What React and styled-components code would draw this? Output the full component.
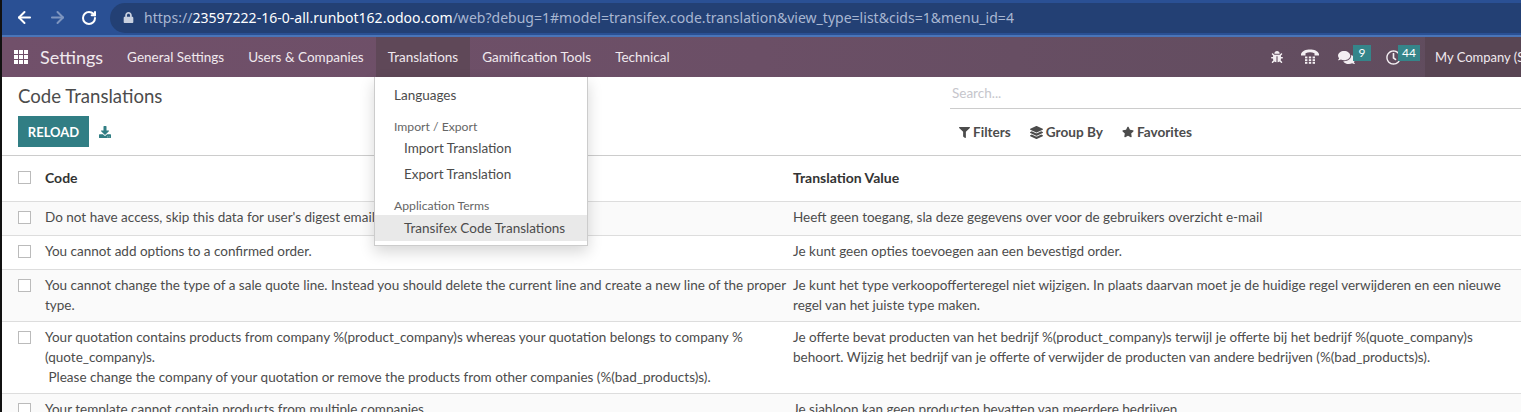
import styled, { createGlobalStyle } from "styled-components";
import { ArrowLeft, ArrowRight, RotateCw } from "lucide-react";
import { FaBug, FaComments, FaDownload, FaFilter, FaLayerGroup, FaLock, FaRegClock, FaStar } from "react-icons/fa";

const GlobalStyle = createGlobalStyle`
    html, body {
        margin: 0;
        height: 100%;
        overflow: hidden;
        background: #fff;
    }
    body {
        font-family: Lato, "Noto Sans", sans-serif;
        font-size: 13.5px;
        color: #4c4c4c;
    }
`;

const rows = [
    {
        code: ["Do not have access, skip this data for user's digest email"],
        value: ["Heeft geen toegang, sla deze gegevens over voor de gebruikers overzicht e-mail"],
    },
    {
        code: ["You cannot add options to a confirmed order."],
        value: ["Je kunt geen opties toevoegen aan een bevestigd order."],
    },
    {
        code: ["You cannot change the type of a sale quote line. Instead you should delete the current line and create a new line of the proper", "type."],
        value: ["Je kunt het type verkoopofferteregel niet wijzigen. In plaats daarvan moet je de huidige regel verwijderen en een nieuwe", "regel van het juiste type maken."],
    },
    {
        code: ["Your quotation contains products from company %(product_company)s whereas your quotation belongs to company %", "(quote_company)s.", "\u00a0Please change the company of your quotation or remove the products from other companies (%(bad_products)s)."],
        value: ["Je offerte bevat producten van het bedrijf %(product_company)s terwijl je offerte bij het bedrijf %(quote_company)s", "behoort. Wijzig het bedrijf van je offerte of verwijder de producten van andere bedrijven (%(bad_products)s)."],
    },
    {
        code: ["Your template cannot contain products from multiple companies."],
        value: ["Je sjabloon kan geen producten bevatten van meerdere bedrijven."],
    },
];

const navItems = ["General Settings", "Users & Companies", "Translations", "Gamification Tools", "Technical"];

function DeskPhone() {
    return (
        <svg width="18" height="16" viewBox="0 0 18 16" fill="currentColor">
            <path d="M0 5C1 1.800 5 .5 9 .5s8 1.300 9 4.500v1.500h-4.500V4.200C12 3.500 10.500 3.200 9 3.200s-3 .3-4.500 1v2.300H0z" />
            {[7.5, 10.2, 12.9].map((y) =>
                [4, 7.8, 11.6].map((x) => <rect key={`${x}-${y}`} x={x} y={y} width="2.400" height="1.900" />)
            )}
        </svg>
    );
}

function AppsIcon() {
    return (
        <svg width="14" height="14" viewBox="0 0 14 14" fill="currentColor">
            {[0, 5, 10].map((y) =>
                [0, 5, 10].map((x) => <rect key={`${x}-${y}`} x={x} y={y} width="4" height="4" />)
            )}
        </svg>
    );
}

export default function App() {
    return (
        <Page>
            <GlobalStyle />
            <BrowserBar>
                <BrowserButton><ArrowLeft size={19} strokeWidth={2.5} /></BrowserButton>
                <BrowserButton $dim><ArrowRight size={19} strokeWidth={2.5} /></BrowserButton>
                <BrowserButton $narrow><RotateCw size={16} strokeWidth={3} /></BrowserButton>
                <AddressBar>
                    <FaLock size={11} />
                    <span>
                        https://<b>23597222-16-0-all.runbot162.odoo.com</b>/web?debug=1#model=transifex.code.translation&amp;view_type=list&amp;cids=1&amp;menu_id=4
                    </span>
                </AddressBar>
            </BrowserBar>
            <NavBar>
                <AppsButton><AppsIcon /></AppsButton>
                <Brand>Settings</Brand>
                {navItems.map((item) => (
                    <NavItem key={item} $active={item === "Translations"}>{item}</NavItem>
                ))}
                <Systray>
                    <TrayIcon><FaBug size={12} /></TrayIcon>
                    <TrayIcon $gap={18}><DeskPhone /></TrayIcon>
                    <TrayIcon $gap={19}>
                        <FaComments size={17} />
                        <Badge $left={15}>9</Badge>
                    </TrayIcon>
                    <TrayIcon $gap={31}>
                        <FaRegClock size={15} />
                        <Badge $left={12}>44</Badge>
                    </TrayIcon>
                    <Company>My Company (San Francisco)</Company>
                </Systray>
            </NavBar>

            <Menu>
                <MenuEntry>Languages</MenuEntry>
                <MenuHeader>Import / Export</MenuHeader>
                <MenuEntry $nested>Import Translation</MenuEntry>
                <MenuEntry $nested>Export Translation</MenuEntry>
                <MenuHeader $spaced>Application Terms</MenuHeader>
                <MenuEntry $nested $active>Transifex Code Translations</MenuEntry>
            </Menu>

            <ControlPanel>
                <div>
                    <Title>Code Translations</Title>
                    <Actions>
                        <ReloadButton>RELOAD</ReloadButton>
                        <DownloadIcon><FaDownload size={12} /></DownloadIcon>
                    </Actions>
                </div>
                <SearchArea>
                    <SearchBox>Search...</SearchBox>
                    <Filters>
                        <FilterItem><FaFilter size={11} />Filters</FilterItem>
                        <FilterItem><FaLayerGroup size={13} />Group By</FilterItem>
                        <FilterItem><FaStar size={12} />Favorites</FilterItem>
                    </Filters>
                </SearchArea>
            </ControlPanel>

            <HeaderRow>
                <CheckCell><Check /></CheckCell>
                <HeadCell>Code</HeadCell>
                <HeadCell>Translation Value</HeadCell>
            </HeaderRow>
            {rows.map((row, i) => (
                <Row key={row.code[0]} $striped={i % 2 === 0}>
                    <CheckCell $top={4}><Check /></CheckCell>
                    <Cell>{row.code.map((line) => <Line key={line}>{line}</Line>)}</Cell>
                    <Cell>{row.value.map((line) => <Line key={line}>{line}</Line>)}</Cell>
                </Row>
            ))}
        </Page>
    );
}

const Page = styled.div`
    position: relative;
    width: 1521px;
    height: 412px;
    overflow: hidden;
    border-left: 2px solid #111;
    box-sizing: border-box;
`;

const BrowserBar = styled.div`
    display: flex;
    align-items: center;
    height: 35px;
    background: #2a5094;
    border-bottom: 2px solid #4a75b8;
    color: #fff;
    padding-left: 13px;
`;

const BrowserButton = styled.span`
    display: flex;
    width: ${(props) => (props.$narrow ? 29 : 33)}px;
    color: ${(props) => (props.$dim ? "#7e95bf" : "#fff")};
`;

const AddressBar = styled.div`
    display: flex;
    align-items: center;
    gap: 10px;
    flex: 1;
    height: 30px;
    padding-left: 13px;
    background: #234074;
    border-radius: 15px 0 0 15px;
    font-family: "Noto Sans", sans-serif;
    font-size: 14px;
    letter-spacing: 0.02px;
    color: #a9b7d2;
    white-space: nowrap;
    svg {
        color: #c9d1e0;
    }
    b {
        font-weight: 400;
        color: #fff;
    }
`;

const NavBar = styled.nav`
    display: flex;
    align-items: center;
    height: 40px;
    background: linear-gradient(90deg, #71506a 0%, #6b4f66 50%, #5f4c5d 100%);
    color: #f0e9ee;
`;

const AppsButton = styled.span`
    display: flex;
    padding-left: 12px;
    color: #fff;
`;

const Brand = styled.span`
    margin-left: 12px;
    margin-right: 12px;
    font-size: 18px;
`;

const NavItem = styled.span`
    display: flex;
    align-items: center;
    height: 40px;
    padding: 0 12px;
    font-size: 13.5px;
    background: ${(props) => (props.$active ? "#5f4858" : "transparent")};
`;

const Systray = styled.div`
    display: flex;
    align-items: center;
    margin-left: auto;
    height: 40px;
`;

const TrayIcon = styled.span`
    position: relative;
    display: flex;
    align-items: center;
    margin-left: ${(props) => props.$gap || 0}px;
    color: #f3eef2;
`;

const Badge = styled.span`
    position: absolute;
    top: 50%;
    left: ${(props) => props.$left}px;
    margin-top: -12px;
    min-width: 18px;
    box-sizing: border-box;
    padding: 0 4px;
    text-align: center;
    background: #35858a;
    color: #fff;
    font-size: 12px;
    line-height: 16px;
`;

const Company = styled.span`
    display: flex;
    align-items: center;
    width: 86px;
    height: 40px;
    margin-left: 24px;
    padding-left: 10px;
    background: #584553;
    font-size: 13px;
    white-space: nowrap;
    overflow: hidden;
`;

const Menu = styled.div`
    position: absolute;
    z-index: 5;
    left: 372px;
    top: 77px;
    width: 212px;
    height: 161px;
    background: #fff;
    border: 1px solid #ccc;
    border-top: none;
    box-shadow: 0 6px 14px rgba(0, 0, 0, 0.16);
    padding-top: 7px;
`;

const MenuEntry = styled.div`
    display: flex;
    align-items: center;
    height: ${(props) => (props.$nested ? 26 : 22)}px;
    padding-left: ${(props) => (props.$nested ? 29 : 19)}px;
    color: #4c4c4c;
    font-size: 13.5px;
    background: ${(props) => (props.$active ? "#e9e9e9" : "transparent")};
`;

const MenuHeader = styled.div`
    padding-left: 19px;
    margin-top: ${(props) => (props.$spaced ? 11 : 13)}px;
    margin-bottom: ${(props) => (props.$spaced ? 2 : 1)}px;
    font-size: 12.2px;
    line-height: 15px;
    color: #666;
`;

const ControlPanel = styled.div`
    display: flex;
    justify-content: space-between;
    height: 79px;
    padding-left: 16px;
    border-bottom: 1px solid #ccc;
    box-sizing: border-box;
`;

const Title = styled.h1`
    margin: 8px 0 0;
    font-size: 18.6px;
    font-weight: 400;
    line-height: 22px;
    color: #4c4c4c;
`;

const Actions = styled.div`
    display: flex;
    align-items: center;
    margin-top: 9px;
`;

const ReloadButton = styled.button`
    width: 71px;
    height: 31px;
    padding: 0;
    border: none;
    background: #317e84;
    color: #fff;
    font-family: inherit;
    font-size: 13px;
    font-weight: 700;
`;

const DownloadIcon = styled.span`
    display: flex;
    margin-left: 10px;
    color: #317e84;
`;

const SearchArea = styled.div`
    width: 571px;
`;

const SearchBox = styled.div`
    height: 31px;
    line-height: 33px;
    padding-left: 2px;
    border-bottom: 1px solid #ccc;
    font-size: 13.5px;
    color: #c6c6cc;
`;

const Filters = styled.div`
    display: flex;
    gap: 19px;
    margin-top: 15px;
    padding-left: 9px;
`;

const FilterItem = styled.span`
    display: flex;
    align-items: center;
    gap: 3px;
    font-size: 13.6px;
    line-height: 16px;
    font-weight: 700;
    color: #4c4c4c;
`;

const HeaderRow = styled.div`
    display: grid;
    grid-template-columns: 43px 748px 1fr;
    align-items: center;
    height: 46px;
    padding-bottom: 2px;
    border-bottom: 1px solid #ddd;
    box-sizing: border-box;
`;

const Row = styled.div`
    display: grid;
    grid-template-columns: 43px 748px 1fr;
    box-sizing: border-box;
    min-height: 34px;
    padding: 5px 0 6px;
    border-bottom: 1px solid #ddd;
    background: ${(props) => (props.$striped ? "#fafafa" : "#fff")};
`;

const CheckCell = styled.div`
    padding-left: 16px;
    padding-top: ${(props) => props.$top || 0}px;
`;

const Check = styled.span`
    display: block;
    width: 11px;
    height: 11px;
    border: 1px solid #bbb;
    background: #fff;
`;

const HeadCell = styled.div`
    font-size: 14px;
    font-weight: 700;
    color: #333;
`;

const Cell = styled.div`
    font-size: 13.5px;
    line-height: 20px;
    color: #4c4c4c;
`;

const Line = styled.div`
    white-space: nowrap;
`;
